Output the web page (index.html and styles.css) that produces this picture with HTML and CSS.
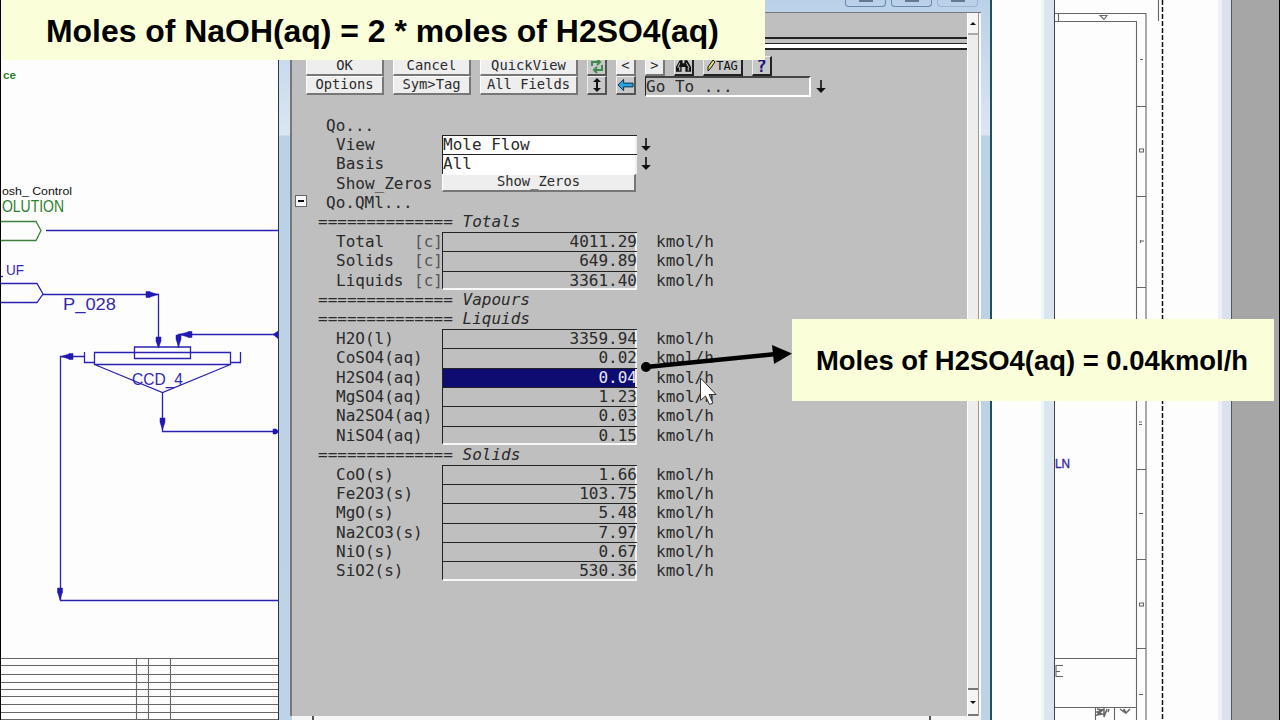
FILE: index.html
```
<!DOCTYPE html>
<html>
	<head>
		<meta charset="utf-8" />
		<title>Qo - Mole Flow</title>
		<link rel="stylesheet" href="styles.css">
	</head>
	<body>
		<div id="desktop">
			<!-- flowsheet behind the dialog -->
			<svg class="sheet" width="1280" height="720" viewBox="0 0 1280 720">
				<g class="green">
					<path d="M0 221.500H36L41 230.500L36 240.500H0" />
				</g>
				<g class="pipe">
					<path d="M46 230.500H278" />
					<path d="M0 283.500H37L43 294L37 302.500H0M43 294.500H158.500V346" />
					<path d="M278 334.500H178.500V348" />
					<path d="M134.500 347H190.500V358.500H134.500Z" />
					<path d="M94.500 352.500H230.500V364.500H94.500ZM94.500 364.500L162.500 392.500L230.500 364.500" />
					<path d="M84.500 352V362.500H94M240.500 352V362.500H231" />
					<path d="M84 356.500H60.500V600.500H278" />
					<path d="M162.500 392.500V431.500H278" />
					<path d="M0 276.500H3" />
				</g>
				<g class="tip">
					<path d="M146 291.500h4v6h-4zM150 292l8 2.500l-8 2.500z" />
					<path d="M156 337h5v4h-5zM156 341h5l-2.500 7z" />
					<path d="M176 335h5v4h-5zM176 339h5l-2.500 8z" />
					<path d="M188 331.500h4v6h-4zM188 332l-9 2.500l9 2.500z" />
					<path d="M278 331l-5 3.500l5 4z" />
					<path d="M69 353.500h4v6h-4zM69 354l-8 2.500l8 2.500z" />
					<path d="M160 418h5v4h-5zM160 422h5l-2.500 8z" />
					<path d="M273 429h3v5h-3zM276 429l3 2.500l-3 2.500z" />
					<path d="M57.500 588h5v4h-5zM57.500 592h5l-2.500 8z" />
				</g>
				<text class="t-green bold" x="3" y="79" font-size="11" textLength="13" lengthAdjust="spacingAndGlyphs">ce</text>
				<text class="t-black" x="2" y="195" font-size="11.500" textLength="70" lengthAdjust="spacingAndGlyphs">osh_ Control</text>
				<text class="t-green" x="2" y="212" font-size="16" textLength="62" lengthAdjust="spacingAndGlyphs">OLUTION</text>
				<text class="t-blue" x="6" y="275" font-size="15" textLength="18" lengthAdjust="spacingAndGlyphs">UF</text>
				<text class="t-blue" x="63" y="309.500" font-size="17" textLength="53" lengthAdjust="spacingAndGlyphs">P_028</text>
				<text class="t-blue" x="132" y="385" font-size="17" textLength="51" lengthAdjust="spacingAndGlyphs">CCD_4</text>
				<g class="rule">
					<path d="M0 658.500H278M0 665.500H278M0 674.500H278M0 682.500H278M0 689.500H278M0 696.500H278M0 704.500H278M0 712.500H278M0 719.500H278" />
					<path d="M136.500 658V720M148.500 658V720M170.500 658V720" />
				</g>
				<!-- drawing border on the right -->
				<g class="rule">
					<path d="M1055 13.500H1146V720M1055 21.500H1136.500V720M1058.500 13V21" />
					<path d="M1136 106.500h10M1136 196.500h10M1136 287.500h10M1136 469.500h10M1136 559.500h10M1136 648.500h10" />
					<path d="M1055 658.500H1136M1055 707.500H1136M1095.500 707V720M1114.500 707V720M1158.500 0V21" />
					<path d="M1063 665.500H1056V676.500H1063M1056 671.500H1060" />
					<path d="M1100 15.500h7l-3 4zM1140 59.500h3M1139.500 149h4v3h-4zM1140 241h4M1140.500 240v3M1139 422h3M1139 424.500h3M1139 513.500h4M1139.500 603h4v3h-4zM1139 694.500h4" />
				</g>
				<path class="scrawl" d="M1097 709l6 1l-6 2l5 2l-5 1l7-6v8l3-8l-3 8M1109 709l-1 3M1120 709l4 3v-3l2 4l4-4" />
				<path class="dash" d="M1162.500 0V720" />
				<text class="t-blue thick" x="1055" y="468" font-size="13" textLength="15" lengthAdjust="spacingAndGlyphs">LN</text>
			</svg>
			<div class="edge edge-mid"></div>
			<div class="edge edge-right"></div>
			<div class="gutter"></div>

			<div class="dialog">
				<div class="titlebar">
					<span class="cap"></span><span class="cap"></span><span class="cap close"></span>
				</div>
				<div class="client">
					<div class="panel">
						<div class="band"></div>
						<div class="toolbar">
							<div class="btn">OK</div>
							<div class="btn">Cancel</div>
							<div class="btn">QuickView</div>
							<div class="ico"><svg width="16" height="16" viewBox="0 0 16 16"><path d="M3 8V4H10M8 1l3 3l-3 3M13 7v5H6M8 9l-3 3l3 3" fill="none" stroke="#3c8c4c" stroke-width="2" /></svg></div>
							<div class="btn small">&lt;</div>
							<div class="btn small">&gt;</div>
							<div class="ico dark"><svg width="18" height="16" viewBox="0 0 18 16"><path d="M1 14V9l4-7h3v3h2V2h3l4 7v5h-6V9H7v5z" fill="#111" /><path d="M5 5l-2 5M12 5l3 5M5 9v4M14 10v3" stroke="#ddd" fill="none" /></svg></div>
							<div class="ico dark tag"><svg width="9" height="14" viewBox="0 0 9 14"><path d="M1 12V8l5-7l2 2l-5 7z" fill="#e8e060" stroke="#111" /></svg>TAG</div>
							<div class="ico dark help">?</div>
						</div>
						<div class="toolbar second">
							<div class="btn">Options</div>
							<div class="btn">Sym&gt;Tag</div>
							<div class="btn">All Fields</div>
							<div class="ico"><svg width="12" height="14" viewBox="0 0 12 14"><path d="M6 0l4 4H7v6h3l-4 4l-4-4h3V4H2z" fill="#111" /></svg></div>
							<div class="ico"><svg width="18" height="14" viewBox="0 0 18 14"><path d="M1 7l6-6v4h10v4H7v4z" fill="#2aa5dc" stroke="#0c2c4c" /></svg></div>
							<div class="goto">Go To ...</div>
							<svg class="drop" width="12" height="16" viewBox="0 0 12 16"><path d="M5.200 1h1.600v8h4l-4.800 5l-4.800-5h4z" /></svg>
						</div>

						<div class="rows">
							<div class="row head">Qo...</div>
							<div class="row"><span class="name">View</span><span class="field white">Mole Flow</span><svg class="drop" width="12" height="16" viewBox="0 0 12 16"><path d="M5.200 1h1.600v8h4l-4.800 5l-4.800-5h4z" /></svg></div>
							<div class="row"><span class="name">Basis</span><span class="field white">All</span><svg class="drop" width="12" height="16" viewBox="0 0 12 16"><path d="M5.200 1h1.600v8h4l-4.800 5l-4.800-5h4z" /></svg></div>
							<div class="row"><span class="name">Show_Zeros</span><span class="btn wide">Show_Zeros</span></div>
							<div class="row head"><i class="fold"></i>Qo.QMl...</div>
							<div class="row sep">============== Totals</div>
							<div class="row"><span class="name">Total<b>[c]</b></span><span class="field">4011.29</span><span class="unit">kmol/h</span></div>
							<div class="row"><span class="name">Solids<b>[c]</b></span><span class="field">649.89</span><span class="unit">kmol/h</span></div>
							<div class="row"><span class="name">Liquids<b>[c]</b></span><span class="field last">3361.40</span><span class="unit">kmol/h</span></div>
							<div class="row sep">============== Vapours</div>
							<div class="row sep">============== Liquids</div>
							<div class="row"><span class="name">H2O(l)</span><span class="field">3359.94</span><span class="unit">kmol/h</span></div>
							<div class="row"><span class="name">CoSO4(aq)</span><span class="field">0.02</span><span class="unit">kmol/h</span></div>
							<div class="row"><span class="name">H2SO4(aq)</span><span class="field picked">0.04</span><span class="unit">kmol/h</span></div>
							<div class="row"><span class="name">MgSO4(aq)</span><span class="field">1.23</span><span class="unit">kmol/h</span></div>
							<div class="row"><span class="name">Na2SO4(aq)</span><span class="field">0.03</span><span class="unit">kmol/h</span></div>
							<div class="row"><span class="name">NiSO4(aq)</span><span class="field last">0.15</span><span class="unit">kmol/h</span></div>
							<div class="row sep">============== Solids</div>
							<div class="row"><span class="name">CoO(s)</span><span class="field">1.66</span><span class="unit">kmol/h</span></div>
							<div class="row"><span class="name">Fe2O3(s)</span><span class="field">103.75</span><span class="unit">kmol/h</span></div>
							<div class="row"><span class="name">MgO(s)</span><span class="field">5.48</span><span class="unit">kmol/h</span></div>
							<div class="row"><span class="name">Na2CO3(s)</span><span class="field">7.97</span><span class="unit">kmol/h</span></div>
							<div class="row"><span class="name">NiO(s)</span><span class="field">0.67</span><span class="unit">kmol/h</span></div>
							<div class="row"><span class="name">SiO2(s)</span><span class="field last">530.36</span><span class="unit">kmol/h</span></div>
						</div>
					</div>
					<div class="scroll">
						<span class="arrow up"></span>
						<span class="arrow down"></span>
					</div>
				</div>
				<div class="hscroll"><i></i><i></i></div>
			</div>

			<!-- annotations -->
			<div class="note note-top"><svg width="673" height="40" viewBox="0 0 673 40"><text x="0" y="31.500" font-size="31" textLength="673" lengthAdjust="spacingAndGlyphs">Moles of NaOH(aq) = 2 * moles of H2SO4(aq)</text></svg></div>
			<div class="note note-side"><svg width="434" height="36" viewBox="0 0 434 36"><text x="0" y="28" font-size="27" textLength="432" lengthAdjust="spacingAndGlyphs">Moles of H2SO4(aq) = 0.04kmol/h</text></svg></div>
			<svg class="pointer" width="160" height="70" viewBox="0 0 160 70">
				<circle cx="10" cy="27" r="5" />
				<path d="M10 27L140 14" stroke="#000" stroke-width="4.500" />
				<path d="M136 5L156 13.500L138 24Z" />
				<path d="M64.500 38V60.500L69.500 56L73.500 64.500L77 63L73 54.500H80Z" fill="#fff" stroke="#333" />
			</svg>
		</div>
	</body>
</html>
```

FILE: styles.css
```
body{
	margin: 0;
	overflow: hidden;
}
#desktop{
	position: relative;
	width: 1280px;
	height: 720px;
	background: #fdfdfd;
	overflow: hidden;
	font-family: "DejaVu Sans Mono", monospace;
	color: #2a2a2a;
}
#desktop::before{
	content: "";
	position: absolute;
	z-index: 5;
	left: 0;
	top: 0;
	width: 1px;
	height: 720px;
	background: #000;
}
.sheet{
	display: block;
	font-family: "Liberation Sans", sans-serif;
}
.sheet path{ fill: none; }
.green path{ stroke: #3d803d; stroke-width: 1.3; }
.pipe path{ stroke: #2a22b0; stroke-width: 1.3; }
.tip path{ fill: #2219b5; stroke: #2219b5; stroke-width: .5; }
.rule path{ stroke: #666; stroke-width: 1.1; }
.scrawl{ stroke: #666; stroke-width: 1.5; }
.dash{ stroke: #111; stroke-width: 1.5; stroke-dasharray: 5 2; }
.t-green{ fill: #2d802d; }
.t-black{ fill: #111; }
.t-blue{ fill: #3528b0; }
.thick{ stroke: #3528b0; stroke-width: .4; }
.bold{ font-weight: bold; }

/* edges of the windows underneath */
.edge{
	position: absolute;
	top: 0;
	height: 720px;
	box-sizing: border-box;
}
.edge-mid{
	left: 1041px;
	width: 14px;
	background: #d9e6f0;
	border-left: 3px solid #f0f5f8;
	border-right: 1px solid #444;
}
.edge-right{
	left: 1218px;
	width: 14px;
	background: #dde1ef;
	border-left: 4px solid #f0f0f8;
	border-right: 1px solid #4c5c5c;
}
.gutter{
	position: absolute;
	left: 1232px;
	top: 0;
	width: 47px;
	height: 720px;
	background: #a6a6a6;
	border-right: 1px solid #000;
}

.dialog{
	position: absolute;
	left: 278px;
	top: 0;
	width: 714px;
	height: 720px;
	box-sizing: border-box;
	padding: 0 9px 0 3px;
	display: flex;
	flex-direction: column;
	border-left: 1px solid #2c3848;
	border-right: 2px solid #24505c;
	background: linear-gradient(#b9d1e8, #dbe6f3 135px, #bad2e6 136px, #bdd3e8);
}
.titlebar{
	height: 12px;
	flex: none;
	display: flex;
	justify-content: flex-end;
	gap: 5px;
	padding-right: 3px;
}
.cap{
	width: 39px;
	height: 6px;
	border: 1px solid #6a87ae;
	border-top: 0;
	border-radius: 0 0 4px 4px;
	position: relative;
}
.cap::after{
	content: "";
	position: absolute;
	left: 13px;
	top: 0;
	width: 14px;
	height: 2px;
	background: #66788f;
}
.cap.close{ border-color: #9db4d2; }
.client{
	flex: 1;
	display: flex;
	margin-left: 8px;
	border-top: 1px solid #777;
	border-left: 2px solid #77777c;
	background: #fafafa;
}
.panel{
	flex: 1;
	background: #bfbfbf;
}
.band{
	height: 24px;
	border-bottom: 2px solid #222;
	position: relative;
	margin-bottom: 17px;
}
.band::after{
	content: "";
	position: absolute;
	left: 0;
	right: 0;
	top: 30px;
	height: 4px;
	border-top: 1px solid #222;
	border-bottom: 2px solid #222;
	background: #fff;
}
.scroll{
	width: 10px;
	margin-right: 2px;
	border-left: 1px solid #fff;
	border-right: 1px solid #999;
	background: #ededed;
	display: flex;
	flex-direction: column;
	justify-content: space-between;
}
.arrow{
	height: 20px;
	background: #f5f5f5;
	border-bottom: 2px solid #aaa;
	display: flex;
	align-items: center;
	justify-content: center;
}
.arrow::after{
	content: "";
	border: 3px solid transparent;
}
.up::after{
	border-top: 0;
	border-bottom-color: #111;
}
.down{
	height: 24px;
	border-top: 2px solid #777;
	border-bottom-color: #777;
}
.down::after{
	border-bottom: 0;
	border-top-color: #111;
}
.hscroll{
	height: 4px;
	flex: none;
	margin-left: 10px;
	background: #f5f5f5;
	display: flex;
	justify-content: space-between;
	padding: 0 50px 0 20px;
}
.hscroll i{
	width: 2px;
	background: #555;
}

.toolbar{
	display: grid;
	grid-template-columns: 78px 78px 98px 20px 20px 20px 20px 40px 20px;
	grid-auto-rows: 20px;
	column-gap: 9px;
	padding-left: 14px;
}
.btn{
	box-sizing: border-box;
	display: flex;
	align-items: center;
	justify-content: center;
	font-size: 13.8px;
	line-height: 15px;
	background: #eee;
	border: 1px solid #fff;
	border-right: 2px solid #777;
	border-bottom: 2px solid #777;
}
.toolbar .btn{ padding-bottom: 1px; }
.ico{
	box-sizing: border-box;
	display: flex;
	align-items: center;
	justify-content: center;
	background: #c8c8c8;
	border: 1px solid #eee;
	border-right: 2px solid #555;
	border-bottom: 2px solid #555;
}
.ico.dark{
	border-right-color: #222;
	border-bottom-color: #222;
}
.tag{
	font-size: 12px;
	color: #111;
}
.help{
	font: bold 17px "DejaVu Sans Mono", monospace;
	color: #1c1480;
}
.second{
	grid-template-columns: 78px 78px 98px 20px 20px 166px 12px;
	grid-auto-rows: 19px;
}
.goto{
	box-sizing: border-box;
	height: 21px;
	font-size: 16px;
	line-height: 18px;
	border: 2px solid #fff;
	border-top-color: #444;
	border-left: 1px solid #222;
}
.second .drop{
	margin: 3px 0 0 -5px;
}
.drop{ fill: #111; }

/* 24 lines of the access window, 19.4px each */
.rows{
	margin-top: 20.5px;
	font-size: 16px;
	line-height: 19px;
}
.row{
	height: 19.4px;
	display: flex;
	padding-left: 44px;
	white-space: pre;
}
.row.head{
	padding-left: 34px;
	position: relative;
}
.row.sep{
	padding-left: 26px;
	font-style: italic;
}
.name{
	width: 106px;
	display: flex;
	justify-content: space-between;
}
.name b{
	font-weight: normal;
	margin-right: -1px;
	color: #555;
}
.field{
	box-sizing: border-box;
	width: 195px;
	text-align: right;
	line-height: 18px;
	border-top: 1.5px solid #222;
	border-left: 1.5px solid #222;
	/* digits run up over the light right edge */
	box-shadow: inset -2px 0 #f0f0f0;
	margin-right: 19px;
}
.field.last{ border-bottom: 2px solid #f8f8f8; }
.field.white{
	text-align: left;
	background: #fff;
	margin-right: 3px;
}
.field.picked{
	background: #0e0c70;
	color: #e8e8f8;
}
.wide{
	width: 194px;
	height: 18px;
	padding-bottom: 2px;
}
.row .drop{ margin-top: 2px; }
.fold{
	position: absolute;
	left: 3px;
	top: 2px;
	width: 10px;
	height: 10px;
	border: 1px solid #666;
	background: #f8f8f8;
}
.fold::after{
	content: "";
	position: absolute;
	left: 2px;
	top: 4px;
	width: 6px;
	height: 2px;
	background: #111;
}

.note{
	position: absolute;
	background: #faffd9;
	display: flex;
	align-items: center;
	justify-content: center;
	font-family: "Liberation Sans", sans-serif;
	font-weight: bold;
}
.note-top{
	left: 0;
	top: 0;
	width: 765px;
	height: 60px;
}
.note-side{
	left: 792px;
	top: 319px;
	width: 482px;
	height: 82px;
}
.pointer{
	position: absolute;
	left: 636px;
	top: 340px;
}
```
